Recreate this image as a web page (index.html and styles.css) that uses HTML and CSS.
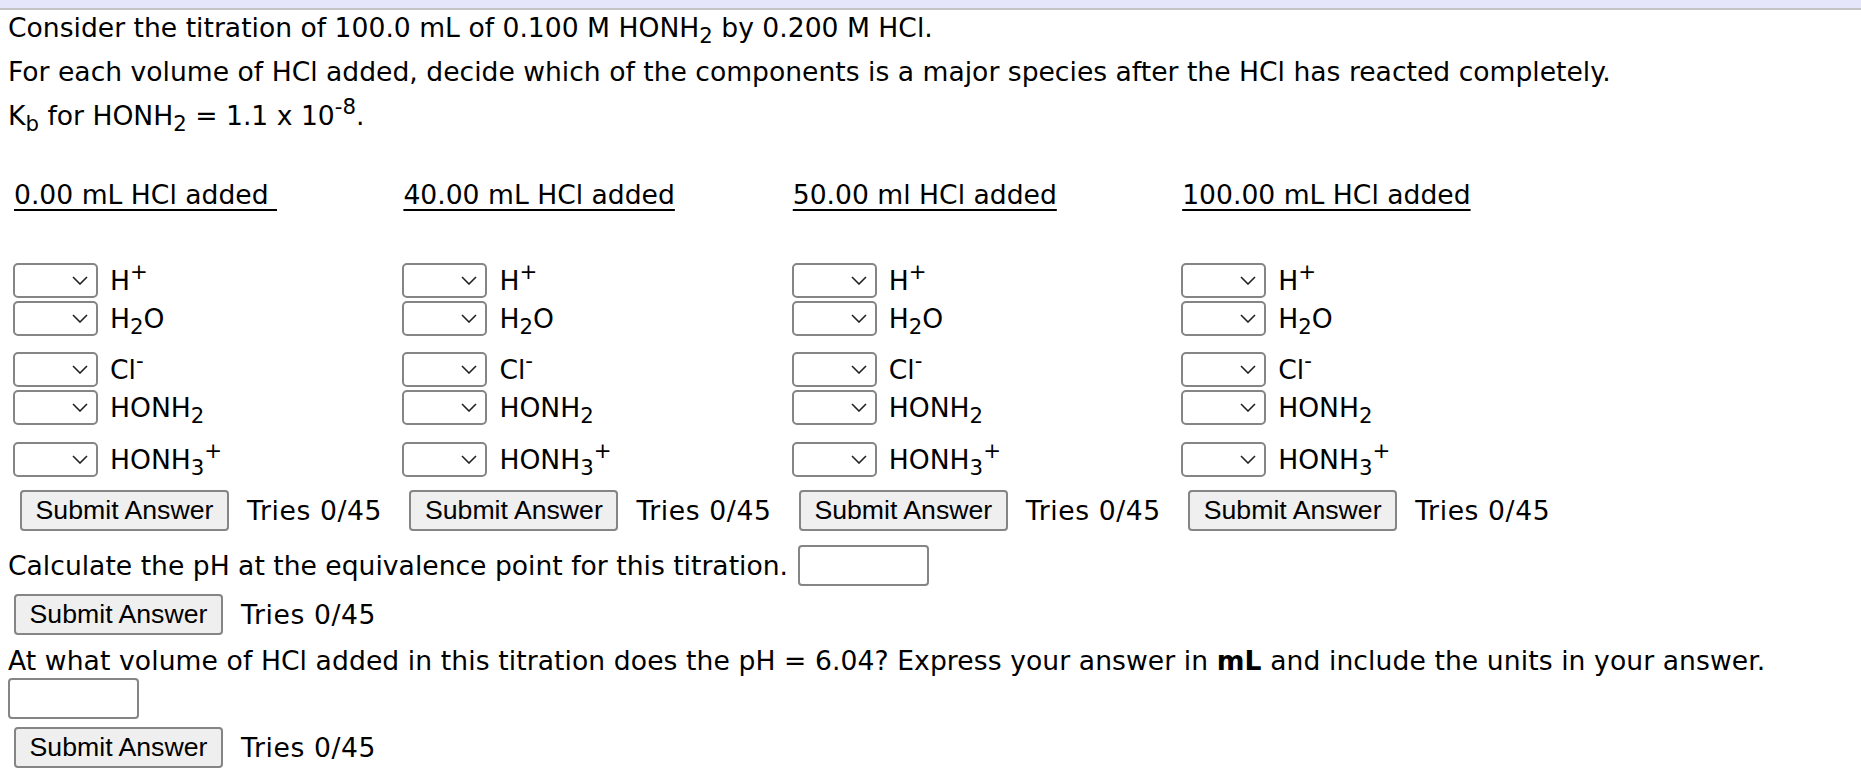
FILE: index.html
```html
<!DOCTYPE html>
<html>
<head>
<meta charset="utf-8">
<title>Titration</title>
<link rel="stylesheet" href="styles.css">
</head>
<body>
<div class="topbar"></div>
<div class="content">
  <div class="intro">
    <div class="line">Consider the titration of 100.0 mL of 0.100 M HONH<sub>2</sub> by 0.200 M HCl.</div>
    <div class="line">For each volume of HCl added, decide which of the components is a major species after the HCl has reacted completely.</div>
    <div class="line">K<sub>b</sub> for HONH<sub>2</sub> = 1.1 x 10<sup>-8</sup>.</div>
  </div>

  <div class="cols">
    <div class="col">
      <div class="col-head"><span class="u">0.00 mL HCl added&nbsp;</span></div>
      <div class="groups">
        <div class="group">
          <div class="row"><div class="sel"><svg width="16" height="9" viewBox="0 0 16 9"><polyline points="1,1 8,8 15,1" fill="none" stroke="#222" stroke-width="1.6"/></svg></div><span>H<sup>+</sup></span></div>
          <div class="row"><div class="sel"><svg width="16" height="9" viewBox="0 0 16 9"><polyline points="1,1 8,8 15,1" fill="none" stroke="#222" stroke-width="1.6"/></svg></div><span>H<sub>2</sub>O</span></div>
        </div>
        <div class="group">
          <div class="row"><div class="sel"><svg width="16" height="9" viewBox="0 0 16 9"><polyline points="1,1 8,8 15,1" fill="none" stroke="#222" stroke-width="1.6"/></svg></div><span>Cl<sup>-</sup></span></div>
          <div class="row"><div class="sel"><svg width="16" height="9" viewBox="0 0 16 9"><polyline points="1,1 8,8 15,1" fill="none" stroke="#222" stroke-width="1.6"/></svg></div><span>HONH<sub>2</sub></span></div>
        </div>
        <div class="group">
          <div class="row"><div class="sel"><svg width="16" height="9" viewBox="0 0 16 9"><polyline points="1,1 8,8 15,1" fill="none" stroke="#222" stroke-width="1.6"/></svg></div><span>HONH<sub>3</sub><sup>+</sup></span></div>
        </div>
      </div>
      <div class="submit-row in-col"><button class="btn">Submit Answer</button><span class="tries">Tries 0/45</span></div>
    </div>

    <div class="col">
      <div class="col-head"><span class="u">40.00 mL HCl added</span></div>
      <div class="groups">
        <div class="group">
          <div class="row"><div class="sel"><svg width="16" height="9" viewBox="0 0 16 9"><polyline points="1,1 8,8 15,1" fill="none" stroke="#222" stroke-width="1.6"/></svg></div><span>H<sup>+</sup></span></div>
          <div class="row"><div class="sel"><svg width="16" height="9" viewBox="0 0 16 9"><polyline points="1,1 8,8 15,1" fill="none" stroke="#222" stroke-width="1.6"/></svg></div><span>H<sub>2</sub>O</span></div>
        </div>
        <div class="group">
          <div class="row"><div class="sel"><svg width="16" height="9" viewBox="0 0 16 9"><polyline points="1,1 8,8 15,1" fill="none" stroke="#222" stroke-width="1.6"/></svg></div><span>Cl<sup>-</sup></span></div>
          <div class="row"><div class="sel"><svg width="16" height="9" viewBox="0 0 16 9"><polyline points="1,1 8,8 15,1" fill="none" stroke="#222" stroke-width="1.6"/></svg></div><span>HONH<sub>2</sub></span></div>
        </div>
        <div class="group">
          <div class="row"><div class="sel"><svg width="16" height="9" viewBox="0 0 16 9"><polyline points="1,1 8,8 15,1" fill="none" stroke="#222" stroke-width="1.6"/></svg></div><span>HONH<sub>3</sub><sup>+</sup></span></div>
        </div>
      </div>
      <div class="submit-row in-col"><button class="btn">Submit Answer</button><span class="tries">Tries 0/45</span></div>
    </div>

    <div class="col">
      <div class="col-head"><span class="u">50.00 ml HCl added</span></div>
      <div class="groups">
        <div class="group">
          <div class="row"><div class="sel"><svg width="16" height="9" viewBox="0 0 16 9"><polyline points="1,1 8,8 15,1" fill="none" stroke="#222" stroke-width="1.6"/></svg></div><span>H<sup>+</sup></span></div>
          <div class="row"><div class="sel"><svg width="16" height="9" viewBox="0 0 16 9"><polyline points="1,1 8,8 15,1" fill="none" stroke="#222" stroke-width="1.6"/></svg></div><span>H<sub>2</sub>O</span></div>
        </div>
        <div class="group">
          <div class="row"><div class="sel"><svg width="16" height="9" viewBox="0 0 16 9"><polyline points="1,1 8,8 15,1" fill="none" stroke="#222" stroke-width="1.6"/></svg></div><span>Cl<sup>-</sup></span></div>
          <div class="row"><div class="sel"><svg width="16" height="9" viewBox="0 0 16 9"><polyline points="1,1 8,8 15,1" fill="none" stroke="#222" stroke-width="1.6"/></svg></div><span>HONH<sub>2</sub></span></div>
        </div>
        <div class="group">
          <div class="row"><div class="sel"><svg width="16" height="9" viewBox="0 0 16 9"><polyline points="1,1 8,8 15,1" fill="none" stroke="#222" stroke-width="1.6"/></svg></div><span>HONH<sub>3</sub><sup>+</sup></span></div>
        </div>
      </div>
      <div class="submit-row in-col"><button class="btn">Submit Answer</button><span class="tries">Tries 0/45</span></div>
    </div>

    <div class="col">
      <div class="col-head"><span class="u">100.00 mL HCl added</span></div>
      <div class="groups">
        <div class="group">
          <div class="row"><div class="sel"><svg width="16" height="9" viewBox="0 0 16 9"><polyline points="1,1 8,8 15,1" fill="none" stroke="#222" stroke-width="1.6"/></svg></div><span>H<sup>+</sup></span></div>
          <div class="row"><div class="sel"><svg width="16" height="9" viewBox="0 0 16 9"><polyline points="1,1 8,8 15,1" fill="none" stroke="#222" stroke-width="1.6"/></svg></div><span>H<sub>2</sub>O</span></div>
        </div>
        <div class="group">
          <div class="row"><div class="sel"><svg width="16" height="9" viewBox="0 0 16 9"><polyline points="1,1 8,8 15,1" fill="none" stroke="#222" stroke-width="1.6"/></svg></div><span>Cl<sup>-</sup></span></div>
          <div class="row"><div class="sel"><svg width="16" height="9" viewBox="0 0 16 9"><polyline points="1,1 8,8 15,1" fill="none" stroke="#222" stroke-width="1.6"/></svg></div><span>HONH<sub>2</sub></span></div>
        </div>
        <div class="group">
          <div class="row"><div class="sel"><svg width="16" height="9" viewBox="0 0 16 9"><polyline points="1,1 8,8 15,1" fill="none" stroke="#222" stroke-width="1.6"/></svg></div><span>HONH<sub>3</sub><sup>+</sup></span></div>
        </div>
      </div>
      <div class="submit-row in-col"><button class="btn">Submit Answer</button><span class="tries">Tries 0/45</span></div>
    </div>
  </div>

  <div class="q-row">Calculate the pH at the equivalence point for this titration.<span class="field inline-field"></span></div>
  <div class="submit-row below"><button class="btn">Submit Answer</button><span class="tries">Tries 0/45</span></div>

  <div class="q-line">At what volume of HCl added in this titration does the pH = 6.04? Express your answer in <b>mL</b> and include the units in your answer.</div>
  <div class="field block-field"></div>
  <div class="submit-row below"><button class="btn">Submit Answer</button><span class="tries">Tries 0/45</span></div>
</div>
</body>
</html>
```

FILE: styles.css
```css
* { box-sizing: border-box; }

body {
  margin: 0;
  background: #ffffff;
  color: #000000;
  font-family: "DejaVu Sans", Verdana, sans-serif;
  font-size: 26.6px;
}

.topbar {
  height: 10px;
  background: #e6e6fa;
  border-bottom: 2px solid #c4c4c4;
}

.content {
  padding-left: 8px;
}

.intro {
  display: flex;
  flex-direction: column;
  gap: 12px;
  margin-top: 2px;
}

.line {
  height: 32px;
  line-height: 32px;
  white-space: nowrap;
}

sub, sup {
  font-size: 0.8em;
  line-height: 0;
}

sub { vertical-align: -0.28em; }
sup { vertical-align: 0.5em; }

.cols {
  display: grid;
  grid-template-columns: repeat(4, 389.4px);
  margin-top: 47px;
  padding-left: 6px;
}

.col-head {
  height: 32px;
  line-height: 32px;
  white-space: nowrap;
}

.u {
  text-decoration: underline;
  text-decoration-thickness: 2px;
  text-underline-offset: 5px;
}

.groups {
  margin-top: 52px;
  display: flex;
  flex-direction: column;
  gap: 15px;
}

.group {
  display: flex;
  flex-direction: column;
  gap: 3px;
}

.group + .group {
  margin-top: 1px;
}

.group:last-child {
  margin-top: 2px;
}

.row {
  display: flex;
  align-items: center;
  gap: 12px;
  height: 35px;
  white-space: nowrap;
}

.sel {
  width: 85px;
  height: 35px;
  margin-left: -1px;
  border: 2px solid #858585;
  border-radius: 5px;
  background: #ffffff;
  display: flex;
  align-items: center;
  justify-content: flex-end;
  padding-right: 8px;
  flex: none;
}

.sel svg { display: block; }

.submit-row {
  display: flex;
  align-items: center;
  height: 41px;
  white-space: nowrap;
}

.submit-row.in-col {
  margin-top: 13px;
  padding-left: 6px;
}

.submit-row.below {
  margin-top: 8px;
  padding-left: 6px;
}

.btn {
  width: 209px;
  height: 41px;
  margin: 0;
  padding: 0;
  background: #efefef;
  border: 2px solid #858585;
  border-radius: 4px;
  color: #000000;
  font-family: "Liberation Sans", Arial, sans-serif;
  font-size: 26.67px;
  flex: none;
}

.tries {
  margin-left: 18px;
  letter-spacing: 0.6px;
}

.q-row {
  display: flex;
  align-items: center;
  height: 41px;
  margin-top: 14px;
  white-space: nowrap;
}

.field {
  width: 131px;
  height: 41px;
  border: 2px solid #858585;
  border-radius: 4px;
  background: #ffffff;
}

.inline-field {
  margin-left: 10px;
}

.q-line {
  height: 32px;
  line-height: 32px;
  margin-top: 10px;
  white-space: nowrap;
  letter-spacing: 0.08px;
}

.block-field {
  margin-top: 1px;
}
```
